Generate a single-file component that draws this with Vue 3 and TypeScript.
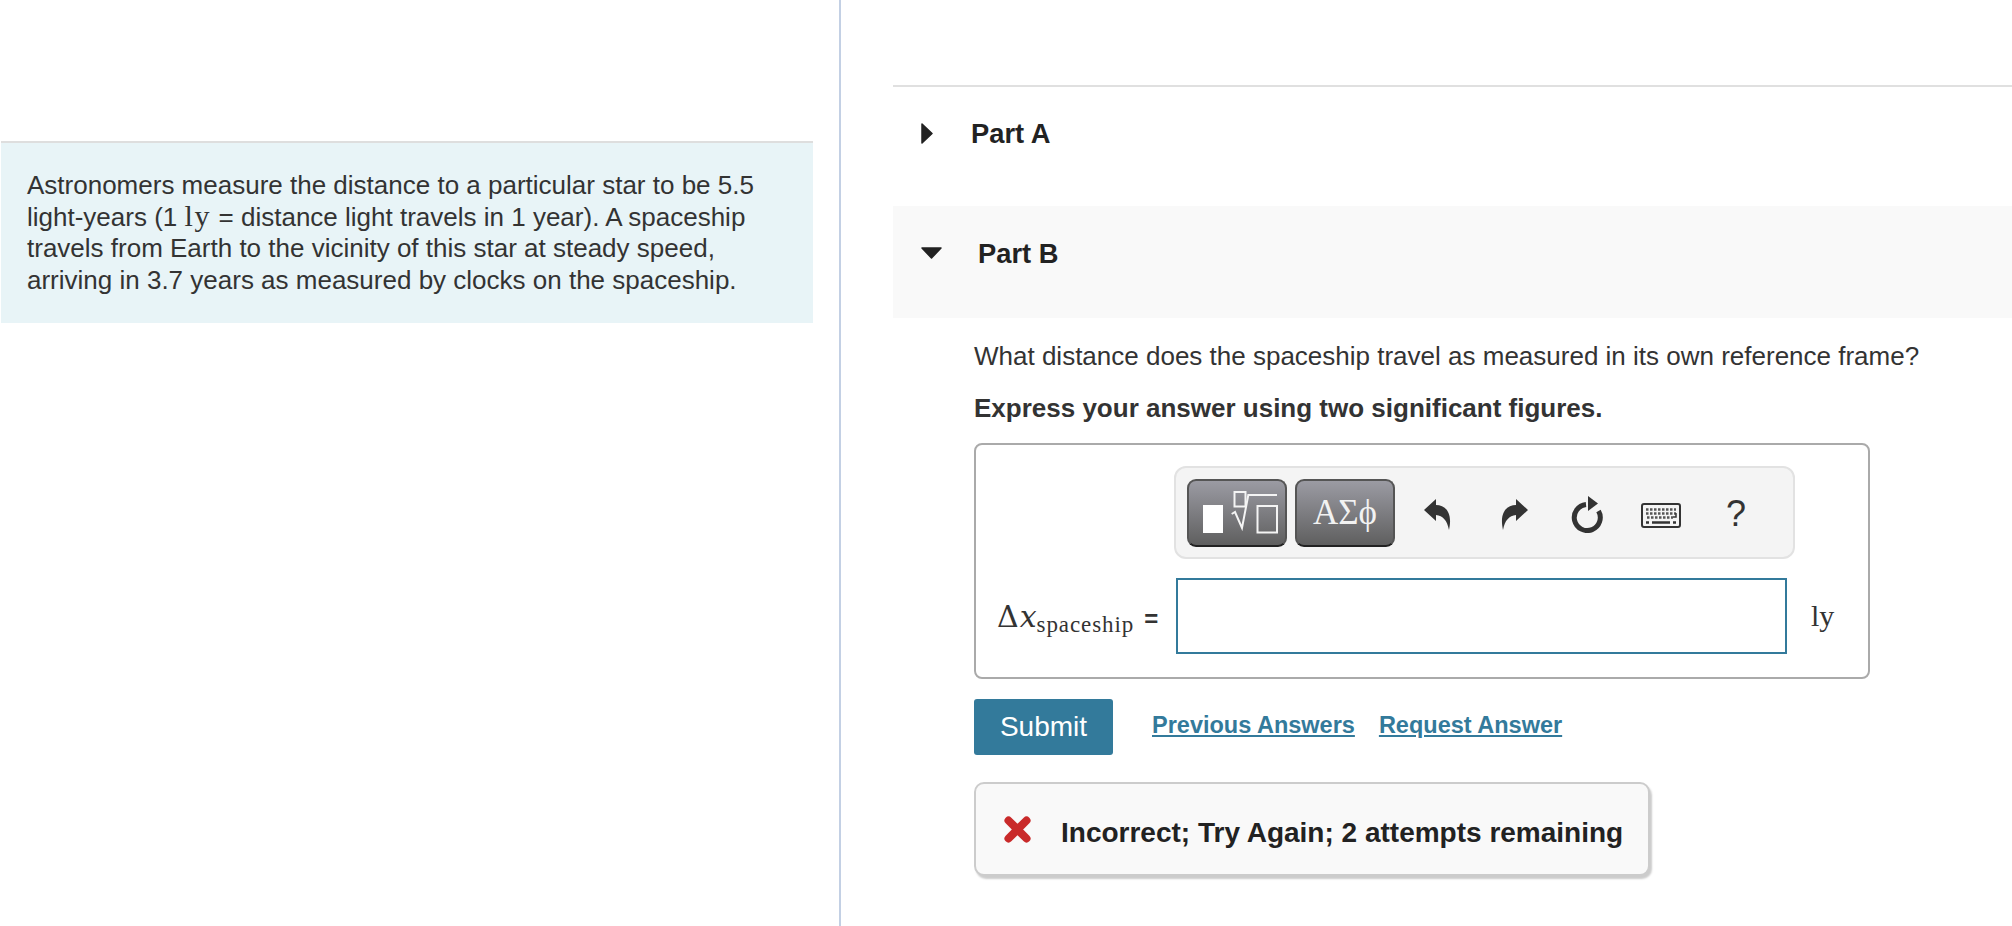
<script setup lang="ts">
const intro = "Astronomers measure the distance to a particular star to be 5.5";
</script>

<template>
  <div class="page">
    <section class="left">
      <div class="callout">
        <p>{{ intro }}<br />light-years (1 <span class="unit">ly</span> = distance light travels in 1 year). A spaceship<br />travels from Earth to the vicinity of this star at steady speed,<br />arriving in 3.7 years as measured by clocks on the spaceship.</p>
      </div>
    </section>
    <section class="right">
      <div class="part part-a">
        <svg class="tri-r" viewBox="0 0 12 21" width="12" height="21"><path d="M1 1 L11 10.5 L1 20 Z" fill="#222" stroke="#222" stroke-width="1.5" stroke-linejoin="round" /></svg>
        <h2>Part A</h2>
      </div>
      <div class="part part-b">
        <svg class="tri-d" viewBox="0 0 21 12" width="21" height="12"><path d="M1 1 H20 L10.5 11 Z" fill="#222" stroke="#222" stroke-width="1.5" stroke-linejoin="round" /></svg>
        <h2>Part B</h2>
      </div>
      <div class="body">
        <p class="q">What distance does the spaceship travel as measured in its own reference frame?</p>
        <p class="q strong">Express your answer using two significant figures.</p>
        <div class="answer">
          <div class="toolbar">
            <button class="tb">
              <svg viewBox="0 0 96 64" width="96" height="64">
                <rect x="14" y="24" width="20" height="28" fill="#fff" />
                <rect x="45.5" y="11" width="11" height="14.5" fill="none" stroke="#f4f4f4" stroke-width="2" />
                <path d="M42.7 33 L46 31 L53 47 L59.3 14 H88" fill="none" stroke="#f4f4f4" stroke-width="2" />
                <rect x="68.5" y="25" width="19.5" height="26.5" fill="none" stroke="#f4f4f4" stroke-width="2" />
              </svg>
            </button>
            <button class="tb greek">ΑΣϕ</button>
            <svg class="ic undo" viewBox="0 0 27 31" width="27" height="31"><path d="M0 11 L12 0 V6 C21 6 29 13 25 31 C23 21 19 17 12 16 V22 Z" fill="#333" /></svg>
            <svg class="ic redo" viewBox="0 0 27 31" width="27" height="31"><path d="M27 11 L15 0 V6 C6 6 -2 13 2 31 C4 21 8 17 15 16 V22 Z" fill="#333" /></svg>
            <svg class="ic refresh" viewBox="0 0 33 37" width="33" height="37">
              <path d="M15 8.6 A13 13 0 1 0 27.5 15" fill="none" stroke="#333" stroke-width="5" />
              <path d="M17 0 L27 7.5 L17 15 Z" fill="#333" />
            </svg>
            <svg class="ic kbd" viewBox="0 0 40 25" width="40" height="25">
              <rect x="1" y="1" width="38" height="23" rx="2" fill="#f4f4f4" stroke="#333" stroke-width="2" />
              <path d="M5 6.5 H35 M5 10.5 H35 M6 14.5 H32" stroke="#555" stroke-width="2.5" stroke-dasharray="2.5 1.5" fill="none" />
              <path d="M32 14 H35 V10" stroke="#333" stroke-width="1.5" fill="none" />
              <path d="M5 19.5 H8 M11 19.5 H29 M32 19.5 H35" stroke="#333" stroke-width="2.5" fill="none" />
            </svg>
            <span class="help">?</span>
          </div>
          <div class="eq">
            <div class="label"><span class="delta">Δ</span><i class="x">x</i><span class="sub">spaceship</span><span class="equals">=</span></div>
            <div class="input"></div>
            <span class="ly">ly</span>
          </div>
        </div>
        <div class="actions">
          <button class="submit">Submit</button>
          <a class="link first">Previous Answers</a>
          <a class="link">Request Answer</a>
        </div>
        <div class="feedback">
          <svg viewBox="0 0 27 27" width="27" height="27"><path d="M4.5 4.5 L22.5 22.5 M22.5 4.5 L4.5 22.5" stroke="#c92a2a" stroke-width="8" stroke-linecap="round" /></svg>
          <span>Incorrect; Try Again; 2 attempts remaining</span>
        </div>
      </div>
    </section>
  </div>
</template>

<style scoped>
.page {
  display: flex;
  width: 2012px;
  height: 926px;
  overflow: hidden;
  background: #fff;
  font-family: "Liberation Sans", Arial, sans-serif;
  color: #333;
}
.left {
  width: 839px;
  flex: none;
  box-sizing: content-box;
  border-right: 2px solid #c3d0e4;
  padding-top: 141px;
}
.callout {
  width: 812px;
  height: 182px;
  margin-left: 1px;
  box-sizing: border-box;
  border-top: 2px solid #dedede;
  background: #e8f4f7;
  padding: 27px 0 0 26px;
}
.callout p {
  margin: 0;
  font-size: 26px;
  line-height: 31.5px;
  white-space: nowrap;
}
.unit {
  font-family: "Liberation Serif", serif;
  font-size: 30px;
  line-height: 20px;
  letter-spacing: 1.75px;
}
.right {
  flex: 1;
  margin-left: 52px;
  margin-top: 85px;
  border-top: 2px solid #e0e0e0;
}
.part {
  display: flex;
  align-items: center;
  padding-left: 28px;
}
.part h2 {
  margin: 2px 0 0;
  font-size: 27.3px;
  font-weight: 700;
  color: #222;
}
.part-a {
  height: 92px;
  margin-bottom: 27px;
  gap: 38px;
}
.part-b {
  height: 94px;
  padding-bottom: 18px;
  gap: 36px;
  background: #f9f9f9;
}
.body {
  padding: 22px 0 0 81px;
}
.q {
  margin: 0 0 20px;
  font-size: 26px;
  line-height: 32px;
  white-space: nowrap;
}
.strong {
  font-weight: 700;
  margin-bottom: 19px;
}
.answer {
  width: 896px;
  height: 236px;
  box-sizing: border-box;
  border: 2px solid #aaa;
  border-radius: 8px;
  padding: 21px 0 0 198px;
}
.toolbar {
  display: flex;
  align-items: center;
  width: 621px;
  height: 93px;
  box-sizing: border-box;
  border: 2px solid #e2e2e2;
  border-radius: 12px;
  background: #f4f4f4;
  padding-left: 11px;
}
.tb {
  width: 100px;
  height: 68px;
  padding: 0;
  margin-right: 8px;
  box-sizing: border-box;
  display: flex;
  align-items: center;
  justify-content: center;
  border: 2px solid #555;
  border-bottom-color: #222;
  border-radius: 9px;
  background: linear-gradient(#9b9ba3, #5f5f5f);
}
.greek {
  font-family: "Liberation Serif", serif;
  font-size: 35px;
  color: #f2f2f2;
}
.ic {
  flex: none;
  margin-top: 3px;
}
.undo {
  margin-left: 21px;
}
.redo {
  margin-left: 50px;
}
.refresh {
  margin-left: 43px;
}
.kbd {
  margin-left: 37px;
  margin-top: 6px;
}
.help {
  margin-left: 45px;
  margin-top: 3px;
  font-size: 36px;
  color: #333;
}
.eq {
  display: flex;
  align-items: center;
  margin: 19px 0 0 -177px;
}
.label {
  display: flex;
  align-items: baseline;
  width: 179px;
  flex: none;
  font-family: "DejaVu Serif", serif;
  color: #333;
}
.delta {
  font-size: 30px;
}
.x {
  font-size: 30px;
  margin-left: 1px;
}
.sub {
  font-family: "Liberation Serif", serif;
  font-size: 23px;
  letter-spacing: 0.9px;
  position: relative;
  top: 5px;
}
.equals {
  font-family: "Liberation Sans", sans-serif;
  font-weight: 700;
  font-size: 24px;
  margin-left: 10px;
}
.input {
  width: 611px;
  height: 76px;
  box-sizing: border-box;
  border: 2px solid #337a9b;
  flex: none;
}
.ly {
  margin-left: 24px;
  font-family: "Liberation Serif", serif;
  font-size: 30px;
  color: #333;
}
.actions {
  display: flex;
  align-items: center;
  margin-top: 20px;
  height: 56px;
}
.submit {
  width: 139px;
  height: 56px;
  border: none;
  border-radius: 3px;
  background: #337a9b;
  color: #fff;
  font-family: inherit;
  font-size: 28px;
  margin-right: 39px;
}
.link {
  font-size: 23.5px;
  font-weight: 700;
  color: #337a9b;
  text-decoration: underline;
  margin-top: -4px;
}
.first {
  margin-right: 24px;
}
.feedback {
  display: flex;
  align-items: center;
  gap: 30px;
  width: 676px;
  height: 94px;
  margin-top: 27px;
  box-sizing: border-box;
  border: 2px solid #ccc;
  border-radius: 10px;
  background: #f9f9f9;
  box-shadow: 2px 3px 2px #ccc;
  padding-left: 28px;
  font-size: 28px;
  font-weight: 700;
  color: #222;
  white-space: nowrap;
}
.feedback span {
  margin-top: 8px;
}
</style>
